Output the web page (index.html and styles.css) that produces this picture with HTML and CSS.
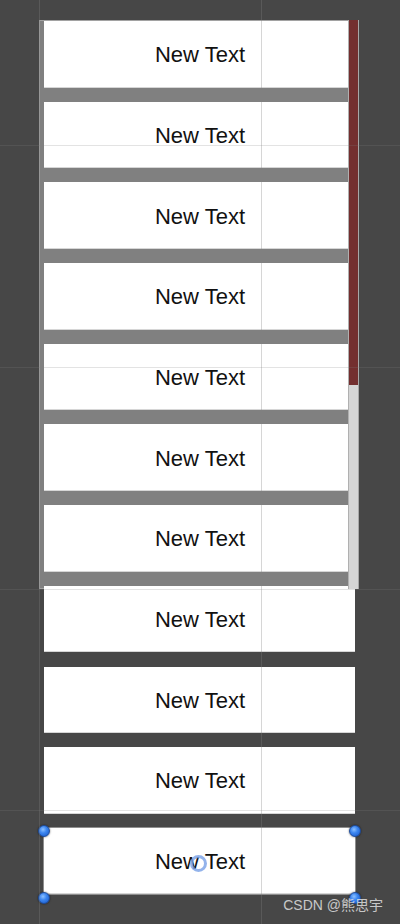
FILE: index.html
```html
<!DOCTYPE html>
<html>
<head>
<meta charset="utf-8">
<link rel="stylesheet" href="styles.css">
</head>
<body>
<div class="scene">
  <div class="scroll-view">
    <div class="content">
      <div class="item"><span>New Text</span></div>
      <div class="item"><span>New Text</span></div>
      <div class="item"><span>New Text</span></div>
      <div class="item"><span>New Text</span></div>
      <div class="item"><span>New Text</span></div>
      <div class="item"><span>New Text</span></div>
      <div class="item"><span>New Text</span></div>
      <div class="item"><span>New Text</span></div>
      <div class="item"><span>New Text</span></div>
      <div class="item"><span>New Text</span></div>
      <div class="item selected"><span>New Text</span>
        <i class="handle tl"></i><i class="handle tr"></i><i class="handle bl"></i><i class="handle br"></i>
        <i class="pivot"></i>
      </div>
    </div>
    <div class="scrollbar"><div class="thumb"></div></div>
  </div>
  <div class="grid">
    <i class="vline v1"></i><i class="vline v2"></i>
    <i class="hline h1"></i><i class="hline h2"></i><i class="hline h3"></i><i class="hline h4"></i>
  </div>
  <div class="watermark">CSDN @熊思宇</div>
</div>
</body>
</html>
```
FILE: styles.css
```css
html, body {
  margin: 0;
  padding: 0;
  background: #474747;
}
.scene {
  position: relative;
  width: 400px;
  height: 924px;
  overflow: hidden;
  padding-top: 20px;
  box-sizing: border-box;
}
.scroll-view {
  position: relative;
  margin-left: 39px;
  width: 320px;
  height: 569px;
  box-sizing: border-box;
  border: 1px solid #a2a2a2;
  background: #808080;
}
.content {
  display: flex;
  flex-direction: column;
  gap: 14.2px;
  padding-left: 4px;
}
.item {
  width: 311px;
  height: 66.5px;
  flex: none;
  background: #ffffff;
  box-shadow: inset 0 -1px 0 #d6d6d6;
  display: flex;
  align-items: center;
  justify-content: center;
  font-family: "Liberation Sans", Arial, sans-serif;
  font-size: 22px;
  color: #111111;
}
.item span {
  position: relative;
  top: 1px;
  left: 0.5px;
}
.selected {
  position: relative;
  outline: 1px solid #8e8e8e;
}
.handle {
  position: absolute;
  width: 12px;
  height: 12px;
  border-radius: 50%;
  box-sizing: border-box;
  background: radial-gradient(circle at 40% 35%, #8cc0ff 0, #3c86f0 40%, #1656c8 100%);
  border: 1px solid #1d4a98;
  box-shadow: 0 0 2px rgba(0, 0, 0, 0.6);
}
.tl { left: -6px; top: -3px; }
.tr { right: -6px; top: -3px; }
.bl { left: -6px; bottom: -9.5px; }
.br { right: -6px; bottom: -9.5px; }
.pivot {
  position: absolute;
  left: 146px;
  top: 27px;
  width: 17px;
  height: 17px;
  box-sizing: border-box;
  border-radius: 50%;
  border: 3px solid rgba(120, 160, 230, 0.8);
}
.scrollbar {
  position: absolute;
  top: -1px;
  right: -1px;
  bottom: -1px;
  width: 11px;
  box-sizing: border-box;
  background: #d5d5d5;
  border-left: 1px solid #b0b0b0;
  border-right: 1px solid #a8a8a8;
}
.thumb {
  height: 365px;
  background: #732f2f;
}
.grid {
  position: absolute;
  inset: 0;
  pointer-events: none;
}
.vline {
  position: absolute;
  top: 0;
  bottom: 0;
  width: 1px;
  background: rgba(128, 128, 128, 0.32);
}
.v1 { left: 39px; }
.v2 { left: 261px; }
.hline {
  position: absolute;
  left: 0;
  right: 0;
  height: 1px;
  background: rgba(128, 128, 128, 0.22);
}
.h1 { top: 145px; }
.h2 { top: 367px; }
.h3 { top: 589px; }
.h4 { top: 810px; }
.watermark {
  position: absolute;
  right: 17px;
  bottom: 11px;
  font-family: "Liberation Sans", "Noto Sans CJK SC", sans-serif;
  font-size: 14px;
  line-height: 16px;
  color: rgba(225, 225, 225, 0.85);
}
```
